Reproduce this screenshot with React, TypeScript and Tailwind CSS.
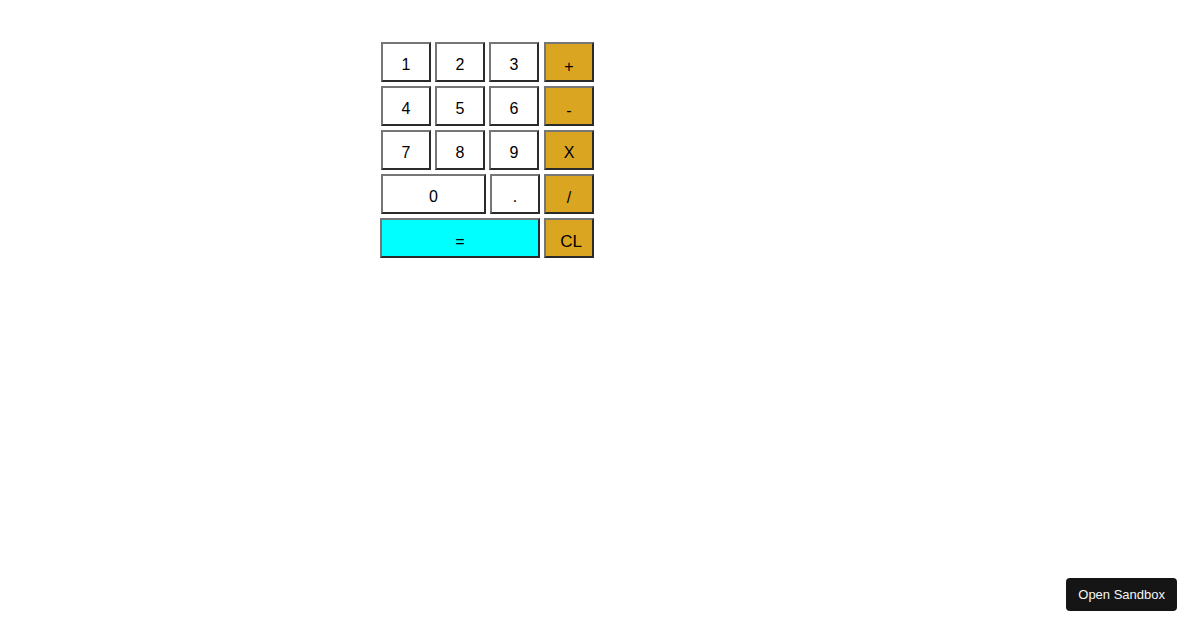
const btn =
  "h-[40px] flex items-center justify-center border-2 border-t-[#767676] border-l-[#767676] border-b-[#2a2a2a] border-r-[#2a2a2a] text-[16px] text-black";

function Key({ label, className = "" }: { label: string; className?: string }) {
  return <button className={`${btn} ${className}`}>{label}</button>;
}

export default function App() {
  return (
    <div className="min-h-[630px] bg-white font-['Liberation_Sans',Arial,sans-serif]">
      <div className="pt-[42px] pl-[381px] flex flex-col gap-[4px]">
        <div className="flex">
          <Key label="1" className="w-[50px] pt-[6px] bg-white" />
          <Key label="2" className="w-[50px] pt-[6px] bg-white ml-[4px]" />
          <Key label="3" className="w-[50px] pt-[6px] bg-white ml-[4px]" />
          <Key label="+" className="w-[50px] pt-[9px] bg-[#daa520] ml-[5px]" />
        </div>
        <div className="flex">
          <Key label="4" className="w-[50px] pt-[6px] bg-white" />
          <Key label="5" className="w-[50px] pt-[6px] bg-white ml-[4px]" />
          <Key label="6" className="w-[50px] pt-[6px] bg-white ml-[4px]" />
          <Key label="-" className="w-[50px] pt-[9px] bg-[#daa520] ml-[5px]" />
        </div>
        <div className="flex">
          <Key label="7" className="w-[50px] pt-[6px] bg-white" />
          <Key label="8" className="w-[50px] pt-[6px] bg-white ml-[4px]" />
          <Key label="9" className="w-[50px] pt-[6px] bg-white ml-[4px]" />
          <Key label="X" className="w-[50px] pt-[6px] bg-[#daa520] ml-[5px]" />
        </div>
        <div className="flex">
          <Key label="0" className="w-[105px] pt-[6px] bg-white" />
          <Key label="." className="w-[50px] pt-[6px] bg-white ml-[4px]" />
          <Key label="/" className="w-[50px] pt-[7px] bg-[#daa520] ml-[4px]" />
        </div>
        <div className="flex -ml-[1px]">
          <Key label="=" className="w-[160px] pt-[7px] bg-[#00ffff]" />
          <Key label="CL" className="w-[50px] pt-[7px] pl-[4px] bg-[#daa520] ml-[4px] text-[17px]" />
        </div>
      </div>
      <button className="fixed right-[23px] bottom-[19px] h-[33px] px-[12px] rounded-[4px] bg-[#151515] text-[#f5f5f5] text-[13px] font-['Liberation_Sans',Arial,sans-serif]">
        Open Sandbox
      </button>
    </div>
  );
}
